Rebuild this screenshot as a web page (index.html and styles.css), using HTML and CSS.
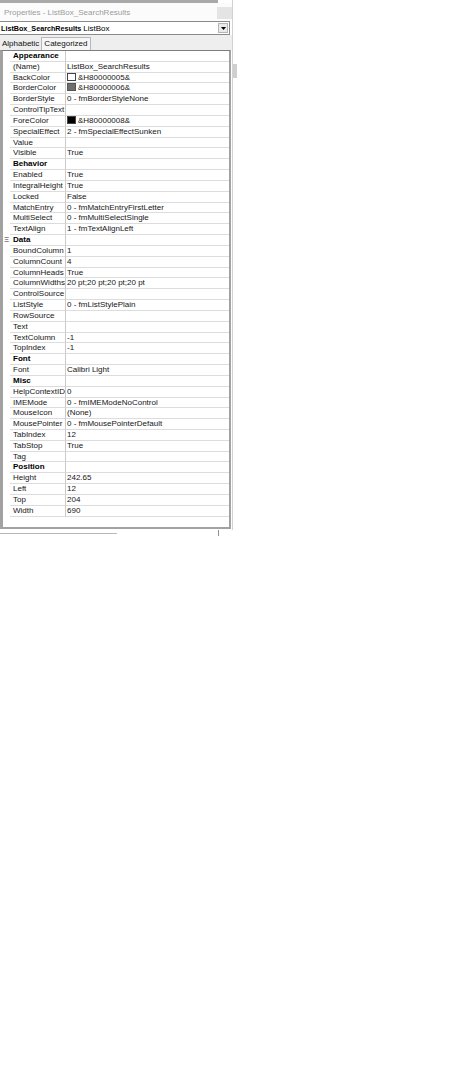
FILE: index.html
```html
<!DOCTYPE html>
<html>
<head>
<meta charset="utf-8">
<link rel="stylesheet" href="styles.css">
</head>
<body>
<div class="stage">
  <div class="win">
    <div class="topbar"></div>
    <div class="titlebar">
      <span class="title">Properties - ListBox_SearchResults</span>
      <span class="closebtn"></span>
    </div>
    <div class="combo">
      <span class="objname">ListBox_SearchResults</span>
      <span class="objtype">ListBox</span>
      <span class="dropbtn"><svg width="5" height="3" viewBox="0 0 5 3"><path d="M0 0h5L2.5 3z" fill="#000"/></svg></span>
    </div>
    <div class="tabs">
      <span class="tab">Alphabetic</span>
      <span class="tab active">Categorized</span>
    </div>
    <div class="grid">
      <div class="row cat"><span class="gut"></span><span class="nm">Appearance</span><span class="val"></span></div>
      <div class="row"><span class="gut"></span><span class="nm">(Name)</span><span class="val">ListBox_SearchResults</span></div>
      <div class="row"><span class="gut"></span><span class="nm">BackColor</span><span class="val"><i class="sw sw-white"></i>&amp;H80000005&amp;</span></div>
      <div class="row"><span class="gut"></span><span class="nm">BorderColor</span><span class="val"><i class="sw sw-gray"></i>&amp;H80000006&amp;</span></div>
      <div class="row"><span class="gut"></span><span class="nm">BorderStyle</span><span class="val">0 - fmBorderStyleNone</span></div>
      <div class="row"><span class="gut"></span><span class="nm">ControlTipText</span><span class="val"></span></div>
      <div class="row"><span class="gut"></span><span class="nm">ForeColor</span><span class="val"><i class="sw sw-black"></i>&amp;H80000008&amp;</span></div>
      <div class="row"><span class="gut"></span><span class="nm">SpecialEffect</span><span class="val">2 - fmSpecialEffectSunken</span></div>
      <div class="row"><span class="gut"></span><span class="nm">Value</span><span class="val"></span></div>
      <div class="row"><span class="gut"></span><span class="nm">Visible</span><span class="val">True</span></div>
      <div class="row cat"><span class="gut"></span><span class="nm">Behavior</span><span class="val"></span></div>
      <div class="row"><span class="gut"></span><span class="nm">Enabled</span><span class="val">True</span></div>
      <div class="row"><span class="gut"></span><span class="nm">IntegralHeight</span><span class="val">True</span></div>
      <div class="row"><span class="gut"></span><span class="nm">Locked</span><span class="val">False</span></div>
      <div class="row"><span class="gut"></span><span class="nm">MatchEntry</span><span class="val">0 - fmMatchEntryFirstLetter</span></div>
      <div class="row"><span class="gut"></span><span class="nm">MultiSelect</span><span class="val">0 - fmMultiSelectSingle</span></div>
      <div class="row"><span class="gut"></span><span class="nm">TextAlign</span><span class="val">1 - fmTextAlignLeft</span></div>
      <div class="row cat"><span class="gut">Ξ</span><span class="nm">Data</span><span class="val"></span></div>
      <div class="row"><span class="gut"></span><span class="nm">BoundColumn</span><span class="val">1</span></div>
      <div class="row"><span class="gut"></span><span class="nm">ColumnCount</span><span class="val">4</span></div>
      <div class="row"><span class="gut"></span><span class="nm">ColumnHeads</span><span class="val">True</span></div>
      <div class="row"><span class="gut"></span><span class="nm">ColumnWidths</span><span class="val">20 pt;20 pt;20 pt;20 pt</span></div>
      <div class="row"><span class="gut"></span><span class="nm">ControlSource</span><span class="val"></span></div>
      <div class="row"><span class="gut"></span><span class="nm">ListStyle</span><span class="val">0 - fmListStylePlain</span></div>
      <div class="row"><span class="gut"></span><span class="nm">RowSource</span><span class="val"></span></div>
      <div class="row"><span class="gut"></span><span class="nm">Text</span><span class="val"></span></div>
      <div class="row"><span class="gut"></span><span class="nm">TextColumn</span><span class="val">-1</span></div>
      <div class="row"><span class="gut"></span><span class="nm">TopIndex</span><span class="val">-1</span></div>
      <div class="row cat"><span class="gut"></span><span class="nm">Font</span><span class="val"></span></div>
      <div class="row"><span class="gut"></span><span class="nm">Font</span><span class="val">Calibri Light</span></div>
      <div class="row cat"><span class="gut"></span><span class="nm">Misc</span><span class="val"></span></div>
      <div class="row"><span class="gut"></span><span class="nm">HelpContextID</span><span class="val">0</span></div>
      <div class="row"><span class="gut"></span><span class="nm">IMEMode</span><span class="val">0 - fmIMEModeNoControl</span></div>
      <div class="row"><span class="gut"></span><span class="nm">MouseIcon</span><span class="val">(None)</span></div>
      <div class="row"><span class="gut"></span><span class="nm">MousePointer</span><span class="val">0 - fmMousePointerDefault</span></div>
      <div class="row"><span class="gut"></span><span class="nm">TabIndex</span><span class="val">12</span></div>
      <div class="row"><span class="gut"></span><span class="nm">TabStop</span><span class="val">True</span></div>
      <div class="row"><span class="gut"></span><span class="nm">Tag</span><span class="val"></span></div>
      <div class="row cat"><span class="gut"></span><span class="nm">Position</span><span class="val"></span></div>
      <div class="row"><span class="gut"></span><span class="nm">Height</span><span class="val">242.65</span></div>
      <div class="row"><span class="gut"></span><span class="nm">Left</span><span class="val">12</span></div>
      <div class="row"><span class="gut"></span><span class="nm">Top</span><span class="val">204</span></div>
      <div class="row"><span class="gut"></span><span class="nm">Width</span><span class="val">690</span></div>
    </div>
    <div class="footer">
      <span class="footline"></span>
      <span class="tick"></span>
    </div>
  </div>
  <div class="side">
    <span class="sideblock"></span>
  </div>
</div>
</body>
</html>
```

FILE: styles.css
```css
html, body {
  margin: 0;
  padding: 0;
  background: #ffffff;
}
body {
  font-family: "Liberation Sans", Arial, sans-serif;
  font-size: 8px;
  color: #111;
}
.stage {
  display: flex;
  align-items: flex-start;
}
.win {
  width: 232px;
  display: flex;
  flex-direction: column;
}
.topbar {
  width: 218px;
  height: 3px;
  background: #a9a9a9;
}
.titlebar {
  height: 18px;
  display: flex;
  align-items: center;
  justify-content: space-between;
  background: #fbfbfb;
}
.title {
  padding-left: 4px;
  color: #9c9c9c;
  font-size: 8px;
}
.closebtn {
  width: 15px;
  height: 12px;
  background: #e4e4e4;
  align-self: flex-start;
  margin-top: 4px;
}
.combo {
  width: 230px;
  height: 14px;
  box-sizing: border-box;
  border: 1px solid #8a8a8a;
  border-left: none;
  background: #fff;
  display: flex;
  align-items: center;
  padding-left: 1px;
  gap: 2px;
}
.objname {
  font-weight: bold;
  font-size: 7.2px;
  color: #000;
}
.objtype {
  font-size: 8px;
  color: #000;
  flex: 1;
}
.dropbtn {
  width: 10px;
  height: 10px;
  margin-right: 1px;
  box-sizing: border-box;
  border: 1px solid #b5b5b5;
  background: #eaeaea;
  display: flex;
  align-items: center;
  justify-content: center;
}
.tabs {
  height: 15px;
  background: #eeeeee;
  display: flex;
  align-items: flex-end;
  box-sizing: border-box;
  padding-left: 1px;
  padding-right: 2px;
}
.tab {
  height: 13px;
  line-height: 13px;
  padding: 0 2px 0 1px;
  color: #111;
}
.tab.active {
  background: #f6f6f6;
  border: 1px solid #b8b8b8;
  border-bottom: none;
  box-sizing: border-box;
  padding: 0 2px;
  line-height: 12px;
}
.grid {
  width: 231px;
  height: 479px;
  box-sizing: border-box;
  border-top: 1px solid #7d7d7d;
  border-left: 3px solid #a2a2a2;
  border-right: 2px solid #a2a2a2;
  border-bottom: 2px solid #a2a2a2;
  background: #fff;
  display: grid;
  grid-auto-rows: 10.83px;
  align-content: start;
}
.row {
  display: grid;
  grid-template-columns: 7px 56px 1fr;
  height: 10.83px;
  line-height: 10.5px;
}
.gut {
  font-size: 8px;
  color: #333;
  line-height: 10px;
  text-align: center;
}
.nm, .val {
  box-sizing: border-box;
  border-bottom: 1px solid #dcdcdc;
  white-space: nowrap;
  overflow: hidden;
}
.nm {
  padding-left: 3px;
  border-right: 1px solid #cacaca;
  color: #161616;
}
.val {
  padding-left: 1px;
  color: #161616;
}
.cat .nm {
  font-weight: bold;
  color: #000;
}
.sw {
  width: 9px;
  height: 8px;
  box-sizing: border-box;
  border: 1px solid #444;
  margin-right: 2px;
  display: inline-block;
  vertical-align: -1px;
}
.sw-white { background: #fff; }
.sw-gray { background: #6e6e6e; border-color: #555; }
.sw-black { background: #000; }
.footer {
  height: 8px;
  display: flex;
  align-items: flex-start;
}
.footline {
  width: 117px;
  height: 1px;
  margin-top: 4px;
  background: #b8b8b8;
}
.tick {
  width: 1px;
  height: 6px;
  margin-left: 101px;
  margin-top: 1px;
  background: #8f8f8f;
}
.side {
  width: 6px;
  height: 530px;
  border-left: 1px solid #d2d2d2;
  display: flex;
  flex-direction: column;
}
.sideblock {
  margin-top: 64px;
  width: 4px;
  height: 14px;
  background: #cfcfcf;
}
```
